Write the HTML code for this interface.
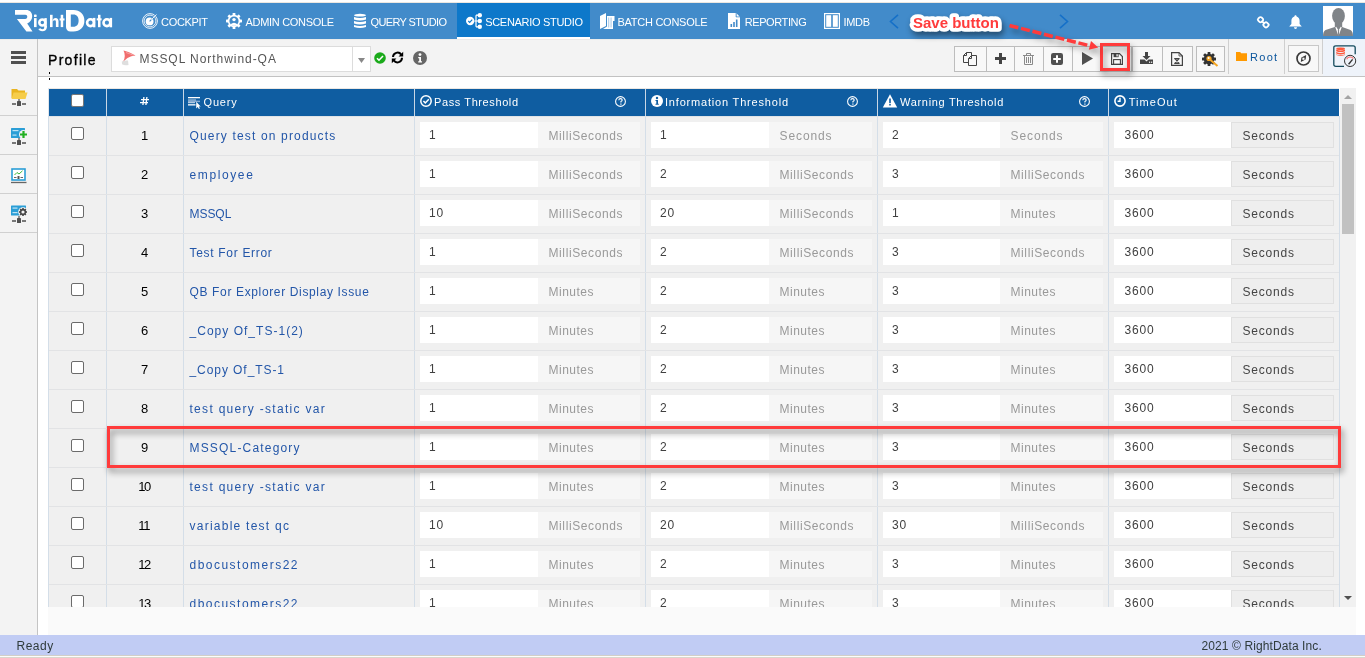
<!DOCTYPE html>
<html><head><meta charset="utf-8"><title>RightData Scenario Studio</title>
<style>
*{box-sizing:border-box;margin:0;padding:0}
html,body{width:1365px;height:658px;overflow:hidden;background:#fff;
 font-family:"Liberation Sans",sans-serif;position:relative}
.a{position:absolute}
.t{position:absolute;white-space:nowrap;line-height:1}
svg{position:absolute;overflow:visible}
#nav{left:0;top:3px;width:1365px;height:36px;background:#428bca}
.nt{color:#fff;font-size:11px;top:16px;letter-spacing:-0.3px}
#tb{left:38px;top:39px;width:1327px;height:37px;background:#f3f3f3}
#sb{left:0;top:39px;width:37px;height:596px;background:#f3f3f3}
.btn{position:absolute;top:46px;height:26px;background:#f8f8f8;border:1px solid #bdbdbd}
.hc{position:absolute;top:89px;height:27px;background:#0f5da1}
.ht{color:#fff;font-size:11px;top:97px}
.cb{position:absolute;width:13px;height:13px;border:1px solid #6b6b6b;border-radius:2px;background:#fff}
.rt{color:#2356a8;font-size:12px;letter-spacing:1.2px}
.num{color:#000;font-size:13px}
.inp{position:absolute;height:26px;background:#fff}
.adn{position:absolute;height:26px;background:#f6f6f6}
.it{color:#404040;font-size:12px;letter-spacing:0.8px}
.at{color:#999;font-size:12px;letter-spacing:0.5px}
</style></head><body>
<div id="root" class="a" style="left:0;top:0;width:1365px;height:658px;background:#fff;will-change:transform">
<div class="a" style="left:0;top:2px;width:1365px;height:1px;background:#ebe7e1"></div>
<div id="nav" class="a"></div>
<div class="a" style="left:457px;top:3px;width:133px;height:34px;background:#0d78ca"></div>
<div class="a" style="left:457px;top:37px;width:133px;height:2px;background:#fff"></div>
<svg style="left:0;top:0" width="130" height="39" viewBox="0 0 130 39">
<g fill="#fff">
<path d="M15 10.1 H26 C30 10.1 32.2 12.8 32.2 16.3 C32.2 19.6 30.4 22.2 27.2 23.4 L32.5 31.6 H26.4 L16.9 18.9 H25.2 C26.6 18.9 27.3 17.9 27.3 16.8 C27.3 15.7 26.6 14.8 25.2 14.8 H15 Z"/>
<rect x="34" y="18.1" width="2.6" height="9"/><rect x="34" y="14.6" width="2.6" height="2.4" rx="0.6"/>
<rect x="44.3" y="18.1" width="2.5" height="9.4"/>
<path d="M46.8 26 V27.6 C46.8 30 45 31.2 42.3 31.2 C40.3 31.2 39 30.3 38.4 29 L40.6 28.3 C41 29 41.5 29.2 42.3 29.2 C43.7 29.2 44.3 28.5 44.3 27.3 V26 Z"/>
<rect x="50" y="14.8" width="2.6" height="12.3"/>
<path d="M52.6 20.5 C53.2 18.8 54.2 18 55.6 18 C57.6 18 58.5 19.3 58.5 21.3 V27.1 H55.9 V21.8 C55.9 20.8 55.5 20.3 54.7 20.3 C53.5 20.3 52.6 21.2 52.6 22.5Z"/>
<rect x="60.7" y="14.8" width="2.5" height="12.3"/><rect x="59.6" y="18.4" width="4.9" height="2.1"/>
<path fill-rule="evenodd" d="M66 10.1 H73.5 C80 10.1 84.4 14.3 84.4 20.8 C84.4 27.3 80 31.6 73.5 31.6 H70.5 C67.8 31.6 66 29.8 66 27.1 Z M70.8 14.6 V26.7 H73.4 C76.8 26.7 78.6 24.4 78.6 20.7 C78.6 17 76.8 14.6 73.4 14.6 Z"/>
<rect x="92.9" y="17.9" width="2.5" height="9.4"/>
<rect x="98" y="14.8" width="2.5" height="12.4"/><rect x="96.7" y="18.3" width="4.9" height="2.1"/>
<rect x="109.6" y="17.9" width="2.5" height="9.4"/>
</g>
<g fill="none" stroke="#fff" stroke-width="2.4">
<circle cx="42.3" cy="22.4" r="3.0" stroke-width="2.5"/>
<circle cx="90.5" cy="22.7" r="3.4" stroke-width="2.6"/>
<circle cx="106.9" cy="22.7" r="3.4" stroke-width="2.6"/>
</g>
</svg>
<div class="t nt" style="left:161px;top:17px;letter-spacing:-0.3px">COCKPIT</div>
<div class="t nt" style="left:245.5px;top:17px;letter-spacing:-0.3px">ADMIN CONSOLE</div>
<div class="t nt" style="left:370.5px;top:17px;letter-spacing:-0.62px">QUERY STUDIO</div>
<div class="t nt" style="left:485.2px;top:17px;letter-spacing:-0.3px">SCENARIO STUDIO</div>
<div class="t nt" style="left:617.4px;top:17px;letter-spacing:-0.25px">BATCH CONSOLE</div>
<div class="t nt" style="left:744.7px;top:17px;letter-spacing:-0.4px">REPORTING</div>
<div class="t nt" style="left:843.4px;top:17px;letter-spacing:-0.3px">IMDB</div>
<svg style="left:142px;top:13px" width="16" height="16" viewBox="0 0 16 16">
<circle cx="8" cy="8" r="7.4" fill="none" stroke="#fff" stroke-width="0.9"/>
<circle cx="8" cy="8" r="5.9" fill="none" stroke="#fff" stroke-width="0.8"/>
<circle cx="7.6" cy="8.4" r="3.9" fill="#fff"/>
<path d="M7.6 8.4 L13.5 2.5" stroke="#428bca" stroke-width="1.1"/>
<path d="M9.2 6.8 L14.5 1.5" stroke="#fff" stroke-width="0.9"/>
</svg>
<svg style="left:226px;top:13px" width="16" height="16" viewBox="0 0 16 16">
<g fill="#fff"><rect x="6.6" y="0" width="2.8" height="16" rx="0.6"/><rect x="0" y="6.6" width="16" height="2.8" rx="0.6"/>
<rect x="6.6" y="0" width="2.8" height="16" rx="0.6" transform="rotate(45 8 8)"/><rect x="6.6" y="0" width="2.8" height="16" rx="0.6" transform="rotate(-45 8 8)"/></g>
<circle cx="8" cy="8" r="6.2" fill="#fff"/>
<circle cx="8" cy="8" r="4.6" fill="#428bca"/>
<circle cx="8" cy="6.6" r="1.7" fill="#fff"/>
<path d="M4.6 11.2 Q8 8.2 11.4 11.2 L11 12 Q8 13.4 5 12 Z" fill="#fff"/>
</svg>
<svg style="left:354px;top:13px" width="12" height="16" viewBox="0 0 12 16">
<g fill="#fff">
<ellipse cx="6" cy="2.2" rx="6" ry="1.4"/>
<path d="M0 3.9 Q6 6.1 12 3.9 V6.4 Q6 8.6 0 6.4 Z"/>
<path d="M0 7.9 Q6 10.1 12 7.9 V10.4 Q6 12.6 0 10.4 Z"/>
<path d="M0 11.9 Q6 14.1 12 11.9 V14 Q6 16.2 0 14 Z"/>
</g></svg>
<svg style="left:466px;top:13px" width="16" height="16" viewBox="0 0 16 16">
<circle cx="4.2" cy="8" r="4.2" fill="#fff"/>
<path d="M2.3 8 L3.7 9.4 L6.2 6.6" fill="none" stroke="#0d78ca" stroke-width="1.1"/>
<path d="M8.4 8 H10 M10 2.2 V13.8 M10 2.2 H13 M10 13.8 H13 M10 8 H13" stroke="#fff" stroke-width="1.2" fill="none"/>
<circle cx="13.8" cy="2.2" r="2.2" fill="#fff"/><circle cx="13.8" cy="8" r="2.2" fill="#fff"/><circle cx="13.8" cy="13.8" r="2.2" fill="#fff"/>
</svg>
<svg style="left:600px;top:13px" width="15" height="16" viewBox="0 0 15 16">
<path d="M0 3 L6 0 V13 L0 16 Z" fill="#fff"/>
<path d="M7 3 H14.5 V8 H13 V16 H3 L7 13.5 Z" fill="#fff"/>
<rect x="8.3" y="4.5" width="0.9" height="10" fill="#9cc0e4"/><rect x="10.6" y="4.5" width="0.9" height="10" fill="#9cc0e4"/>
</svg>
<svg style="left:728px;top:13px" width="12" height="16" viewBox="0 0 12 16">
<path d="M0 0 H8 L12 4 V16 H0 Z" fill="#fff"/>
<path d="M8 0 V4 H12" fill="#428bca" stroke="#428bca" stroke-width="0.6"/>
<path d="M8.6 0.6 L11.4 3.4 H8.6Z" fill="#fff"/>
<rect x="2.5" y="11" width="1.6" height="3" fill="#428bca"/><rect x="5.2" y="9" width="1.6" height="5" fill="#428bca"/><rect x="7.9" y="6.5" width="1.6" height="7.5" fill="#428bca"/>
</svg>
<svg style="left:824px;top:13px" width="16" height="16" viewBox="0 0 16 16">
<rect x="0.6" y="0.6" width="14.8" height="14.8" fill="none" stroke="#fff" stroke-width="1.2"/>
<rect x="2.2" y="2.2" width="5" height="11.6" fill="#fff"/><rect x="8.8" y="2.2" width="5" height="11.6" fill="#fff"/>
</svg>
<svg style="left:889px;top:14px" width="10" height="15" viewBox="0 0 10 15">
<path d="M9 0.8 L1.5 7.5 L9 14.2" fill="none" stroke="#1570c8" stroke-width="1.6"/></svg>
<svg style="left:1059px;top:14px" width="10" height="15" viewBox="0 0 10 15">
<path d="M1 0.8 L8.5 7.5 L1 14.2" fill="none" stroke="#1570c8" stroke-width="1.6"/></svg>
<svg style="left:1257px;top:16px" width="13" height="13" viewBox="0 0 13 13">
<g fill="none" stroke="#fff" stroke-width="1.8">
<rect x="1.2" y="1.4" width="4.6" height="4.6" rx="1.4" transform="rotate(45 3.5 3.7)"/>
<rect x="6.7" y="6.5" width="4.6" height="4.6" rx="1.4" transform="rotate(45 9 8.8)"/>
<path d="M4.8 5.2 L7.6 7.6"/></g></svg>
<svg style="left:1289px;top:14.5px" width="13" height="14" viewBox="0 0 13 14">
<path d="M6.5 0.3 C7.3 0.3 7.6 1 7.6 1.4 C9.8 2 10.6 4 10.6 6 V9 L12.8 11.6 H0.2 L2.4 9 V6 C2.4 4 3.2 2 5.4 1.4 C5.4 1 5.7 0.3 6.5 0.3Z" fill="#fff"/>
<path d="M5 12.3 H8 C8 13.4 7.3 13.9 6.5 13.9 C5.7 13.9 5 13.4 5 12.3Z" fill="#fff"/></svg>
<div class="a" style="left:1323px;top:6px;width:30px;height:30px;background:#fff;overflow:hidden">
<svg style="left:0;top:0" width="30" height="30" viewBox="0 0 30 30">
<ellipse cx="15.5" cy="10" rx="6.4" ry="8" fill="#808488"/>
<path d="M11.8 13 L11.8 21 L2.5 24 Q0 25.5 0 30 H30 Q30 25.5 27.5 24 L19.2 21 V13 Z" fill="#808488"/>
<path d="M12.3 21.2 L15.5 30 L18.7 21.2 L17.8 20.8 L15.5 24.6 L13.2 20.8Z" fill="#fff"/>
<path d="M14.9 24.5 L15.5 23.6 L16.1 24.5 L15.9 30 H15.1Z" fill="#808488"/>
</svg></div>
<div id="tb" class="a"></div>
<div id="sb" class="a"></div>
<div class="a" style="left:0;top:39px;width:1365px;height:1px;background:#ebebeb"></div>
<div class="a" style="left:37px;top:39px;width:1px;height:596px;background:#c4c4c4"></div>
<div class="a" style="left:38px;top:76px;width:1327px;height:1px;background:#c2c2c2"></div>
<div class="a" style="left:1323px;top:39px;width:42px;height:37px;background:#eef3fa"></div>
<div class="a" style="left:11px;top:51px;width:15px;height:3px;background:#505050"></div>
<div class="a" style="left:11px;top:56px;width:15px;height:3px;background:#505050"></div>
<div class="a" style="left:11px;top:61px;width:15px;height:3px;background:#505050"></div>
<div class="t " style="left:48px;top:53px;font-size:14px;color:#000;letter-spacing:1.3px;-webkit-text-stroke:0.35px #000">Profile</div>
<div class="a" style="left:111px;top:46px;width:260px;height:26px;background:#fff;border:1px solid #dcdcdc"></div>
<div class="a" style="left:352px;top:47px;width:1px;height:24px;background:#dcdcdc"></div>
<svg style="left:358px;top:58px" width="7" height="5" viewBox="0 0 7 5"><path d="M0 0 H7 L3.5 5Z" fill="#888"/></svg>
<svg style="left:120px;top:49px" width="16" height="17" viewBox="0 0 16 17">
<path d="M3.5 1.5 Q8.5 2.5 15.5 6.5 Q11 6.8 7.5 9 Q5.5 10.8 3.2 12.5 Q6.2 7 3.5 1.5Z" fill="#ee4a4a" opacity="0.8"/>
<path d="M6 3.5 Q10 4.8 13.5 6.3" stroke="#fff" stroke-width="0.5" fill="none" opacity="0.7"/>
<path d="M1.8 12.5 Q4.5 11 8 11.5 L8.5 16 Q4.5 16.8 2 15.2Z" fill="#c8c8c8" opacity="0.6"/></svg>
<div class="t " style="left:139.5px;top:53px;font-size:12px;color:#555;letter-spacing:0.95px">MSSQL Northwind-QA</div>
<svg style="left:374px;top:52px" width="12" height="12" viewBox="0 0 12 12">
<circle cx="6" cy="6" r="5.8" fill="#1aaa1a"/><path d="M3 6.2 L5 8.2 L9 4" fill="none" stroke="#fff" stroke-width="1.6"/></svg>
<svg style="left:391px;top:51px" width="13" height="13" viewBox="0 0 13 13">
<path d="M2 6 A4.5 4.5 0 0 1 10.2 3.6" fill="none" stroke="#000" stroke-width="2"/>
<path d="M11 6.8 A4.5 4.5 0 0 1 2.8 9.4" fill="none" stroke="#000" stroke-width="2"/>
<path d="M12.2 0.8 V5.4 H7.6Z" fill="#000"/><path d="M0.8 12.2 V7.6 H5.4Z" fill="#000"/></svg>
<svg style="left:413px;top:51px" width="14" height="14" viewBox="0 0 14 14">
<circle cx="7" cy="7" r="7" fill="#666"/><circle cx="7" cy="3.6" r="1.4" fill="#fff"/><path d="M5.2 6 H8 V10.3 H9 V11.6 H5.2 V10.3 H6.2 V7.3 H5.2Z" fill="#fff"/></svg>
<div class="btn" style="left:954px;width:33px;background:#f8f8f8"></div>
<div class="btn" style="left:986px;width:30px;background:#f8f8f8"></div>
<div class="btn" style="left:1014px;width:30px;background:#f8f8f8"></div>
<div class="btn" style="left:1043px;width:30px;background:#f8f8f8"></div>
<div class="btn" style="left:1072px;width:30px;background:#f8f8f8"></div>
<div class="btn" style="left:1102px;width:30px;background:#f8f8f8"></div>
<div class="btn" style="left:1132px;width:31px;background:#f8f8f8"></div>
<div class="btn" style="left:1162px;width:31px;background:#f8f8f8"></div>
<div class="btn" style="left:1196px;width:29px;background:#f8f8f8"></div>
<svg style="left:963px;top:52px" width="15" height="15" viewBox="0 0 15 15">
<path d="M0.5 3.5 L3.5 0.5 H8.5 V10.5 H0.5Z" fill="#f8f8f8" stroke="#444" stroke-width="1"/>
<path d="M0.5 3.5 H3.5 V0.5" fill="none" stroke="#444" stroke-width="1"/>
<path d="M5.5 6.5 L8.5 3.5 H13.5 V13.5 H5.5Z" fill="#f8f8f8" stroke="#444" stroke-width="1"/>
<path d="M5.5 6.5 H8.5 V3.5" fill="none" stroke="#444" stroke-width="1"/></svg>
<svg style="left:995px;top:53px" width="11" height="11" viewBox="0 0 11 11"><path d="M4 0 H7 V4 H11 V7 H7 V11 H4 V7 H0 V4 H4Z" fill="#444"/></svg>
<svg style="left:1023px;top:53px" width="11" height="12" viewBox="0 0 11 12">
<g fill="none" stroke="#8a8a8a" stroke-width="1"><path d="M0 2.5 H11 M3.5 2.5 V0.5 H7.5 V2.5 M1.5 2.5 V11.5 H9.5 V2.5 M3.5 4 V10 M5.5 4 V10 M7.5 4 V10"/></g></svg>
<svg style="left:1051px;top:53px" width="12" height="12" viewBox="0 0 12 12">
<rect x="0" y="0" width="12" height="12" rx="2.2" fill="#505050"/><path d="M5 2.2 H7 V5 H9.8 V7 H7 V9.8 H5 V7 H2.2 V5 H5Z" fill="#fff"/></svg>
<svg style="left:1082px;top:52px" width="11" height="13" viewBox="0 0 11 13"><path d="M0 0 L11 6.5 L0 13Z" fill="#505050"/></svg>
<svg style="left:1111px;top:53px" width="12" height="12" viewBox="0 0 12 12">
<path d="M0.6 0.6 H8.5 L11.4 3.5 V11.4 H0.6Z" fill="none" stroke="#444" stroke-width="1.2"/>
<rect x="2.6" y="0.6" width="5" height="3.6" fill="#444"/><rect x="5.4" y="1.2" width="1.4" height="2.2" fill="#f0f0f0"/>
<rect x="2.6" y="6.6" width="6.8" height="4.8" fill="none" stroke="#444" stroke-width="1.1"/></svg>
<svg style="left:1140px;top:52px" width="13" height="12" viewBox="0 0 13 12">
<path d="M5 0 H8 V4 H10.5 L6.5 8 L2.5 4 H5Z" fill="#444"/>
<path d="M0 7.5 H4.5 L6.5 9.5 L8.5 7.5 H13 V12 H0Z" fill="#444"/>
<rect x="9" y="9.6" width="1.2" height="1.2" fill="#fff"/><rect x="11" y="9.6" width="1.2" height="1.2" fill="#fff"/></svg>
<svg style="left:1171px;top:52px" width="12" height="14" viewBox="0 0 12 14">
<path d="M0.6 0.6 H8 L11.4 4 V13.4 H0.6Z" fill="none" stroke="#444" stroke-width="1.2"/>
<path d="M8 0.6 V4 H11.4" fill="none" stroke="#444" stroke-width="0.8"/>
<path d="M3.2 6.6 H8.6 M3.2 11.4 H8.6 M4 6.6 L8 11.4 M8 6.6 L4 11.4" stroke="#444" stroke-width="1.1" fill="none"/></svg>
<svg style="left:1202px;top:52px" width="17" height="15" viewBox="0 0 17 15">
<g fill="#333"><rect x="5.6" y="0" width="2.8" height="14" rx="0.5"/><rect x="0" y="5.6" width="14" height="2.8" rx="0.5"/>
<rect x="5.6" y="0" width="2.8" height="14" rx="0.5" transform="rotate(45 7 7)"/><rect x="5.6" y="0" width="2.8" height="14" rx="0.5" transform="rotate(-45 7 7)"/>
<circle cx="7" cy="7" r="5.2"/></g>
<circle cx="7" cy="6.5" r="2.6" fill="#f5a623"/><circle cx="6.6" cy="6" r="1" fill="#fff"/>
<path d="M8.5 8 L15.5 14" stroke="#f5a623" stroke-width="2"/></svg>
<div class="a" style="left:1228px;top:39px;width:1px;height:35px;background:#cfcfcf"></div>
<div class="a" style="left:1284px;top:39px;width:1px;height:35px;background:#cfcfcf"></div>
<div class="a" style="left:1322px;top:39px;width:1px;height:35px;background:#cfcfcf"></div>
<svg style="left:1236px;top:52px" width="11" height="9" viewBox="0 0 11 9"><path d="M0 0 H4.2 L5.2 1.3 H11 V9 H0Z" fill="#ff9900"/></svg>
<div class="t " style="left:1250px;top:52px;font-size:11px;color:#0a559c;letter-spacing:1.3px">Root</div>
<div class="btn" style="left:1288px;top:45px;width:31px;height:27px;background:#f8f8f8;border-color:#c8c8c8"></div>
<svg style="left:1296px;top:51px" width="15" height="15" viewBox="0 0 15 15">
<circle cx="7.5" cy="7.5" r="6.5" fill="none" stroke="#3a3a3a" stroke-width="1.7"/>
<path d="M10.2 4.1 L9.6 8.6 L4.8 11 L5.4 6.4Z" fill="#3a3a3a"/><rect x="6.4" y="6.7" width="2.1" height="2.1" fill="#f8f8f8"/></svg>
<svg style="left:1333px;top:45px" width="24" height="23" viewBox="0 0 24 23">
<path d="M11 21.3 H2.8 Q0.8 21.3 0.8 19.3 V2.8 Q0.8 0.8 2.8 0.8 H20.2 Q22.2 0.8 22.2 2.8 V9.3" fill="none" stroke="#134a5c" stroke-width="1.3"/>
<g fill="#ff5a3c"><ellipse cx="7.6" cy="3.8" rx="4.4" ry="1.2"/><path d="M3.2 4.6 Q7.6 6.4 12 4.6 V6.2 Q7.6 8 3.2 6.2Z"/><path d="M3.2 7 Q7.6 8.8 12 7 V8.6 Q7.6 10.4 3.2 8.6Z"/><path d="M3.2 9.2 Q7.6 11 12 9.2 V10 Q7.6 11.8 3.2 10Z" opacity="0.8"/></g>
<circle cx="17.1" cy="15.9" r="5.6" fill="#eef3fa" stroke="#333" stroke-width="1"/>
<path d="M13.6 14.2 A4 4 0 0 1 20.4 13.6" fill="none" stroke="#ff6a6a" stroke-width="1.1"/>
<path d="M15.6 19.2 L19.6 14.4" stroke="#333" stroke-width="1.4"/></svg>
<div class="a" style="left:0;top:115px;width:37px;height:1px;background:#d0d0d0"></div>
<div class="a" style="left:0;top:154px;width:37px;height:1px;background:#d0d0d0"></div>
<div class="a" style="left:0;top:193px;width:37px;height:1px;background:#d0d0d0"></div>
<div class="a" style="left:0;top:232px;width:37px;height:1px;background:#d0d0d0"></div>
<svg style="left:11px;top:88px" width="17" height="19" viewBox="0 0 17 19">
<path d="M0.5 1 H6 L7.5 2.5 H14 V10 H0.5Z" fill="#e9b420"/>
<path d="M2.5 4.5 H16.5 L14.5 11 H0.5Z" fill="#f6cd4a"/>
<g transform="translate(1,0)"><path d="M0 16 H4 M10 16 H14" stroke="#505050" stroke-width="1.4"/><rect x="5" y="13" width="4" height="5" rx="0.6" fill="#505050"/><path d="M7 11 V13" stroke="#505050" stroke-width="1.2"/></g></svg>
<svg style="left:11px;top:127px" width="17" height="19" viewBox="0 0 17 19">
<rect x="0" y="1" width="14" height="10" rx="0.5" fill="#2b9ed6"/>
<rect x="1.5" y="3" width="6" height="1.2" fill="#bfe3f5"/><rect x="1.5" y="7.5" width="4" height="1.2" fill="#bfe3f5"/>
<circle cx="12.5" cy="7.5" r="4.5" fill="#f3f3f3"/>
<path d="M12.5 4 V11 M9 7.5 H16" stroke="#22b022" stroke-width="2.2"/>
<g transform="translate(1,0)"><path d="M0 16 H4 M10 16 H14" stroke="#505050" stroke-width="1.4"/><rect x="5" y="13" width="4" height="5" rx="0.6" fill="#505050"/><path d="M7 11 V13" stroke="#505050" stroke-width="1.2"/></g></svg>
<svg style="left:11px;top:168px" width="17" height="16" viewBox="0 0 17 16">
<rect x="1" y="1" width="13" height="11" fill="#fff" stroke="#2b9ed6" stroke-width="1.6"/>
<path d="M3.5 7 L6 4.5 L8 6 L11.5 2.8" fill="none" stroke="#3cb83c" stroke-width="1"/>
<path d="M3 9.5 H5.5 M9.5 9.5 H12" stroke="#555" stroke-width="0.9"/><rect x="6.5" y="8" width="2" height="3" fill="#555"/>
<path d="M0 14.5 H15.5" stroke="#666" stroke-width="1.3"/></svg>
<svg style="left:11px;top:205px" width="17" height="19" viewBox="0 0 17 19">
<rect x="0" y="0.5" width="15" height="10" rx="0.5" fill="#2b9ed6"/>
<rect x="1.5" y="2.5" width="5" height="1.2" fill="#bfe3f5"/><rect x="1.5" y="7" width="5" height="1.2" fill="#bfe3f5"/>
<circle cx="12" cy="7" r="4.8" fill="#f3f3f3"/>
<g fill="#444"><circle cx="12" cy="7" r="3"/><rect x="11.2" y="3" width="1.6" height="8"/><rect x="8" y="6.2" width="8" height="1.6"/>
<rect x="11.2" y="3" width="1.6" height="8" transform="rotate(45 12 7)"/><rect x="11.2" y="3" width="1.6" height="8" transform="rotate(-45 12 7)"/></g>
<circle cx="12" cy="7" r="1.6" fill="#f3f3f3"/>
<g transform="translate(1,0)"><path d="M0 16 H4 M10 16 H14" stroke="#505050" stroke-width="1.4"/><rect x="5" y="13" width="4" height="5" rx="0.6" fill="#505050"/><path d="M7 11 V13" stroke="#505050" stroke-width="1.2"/></g></svg>
<div class="a" style="left:38px;top:77px;width:1327px;height:558px;background:#fff"></div>
<div class="a" style="left:48px;top:607px;width:1308px;height:28px;background:#fafafa"></div>
<div class="a" style="left:48.5px;top:72px;width:1.6px;height:2px;background:#000"></div>
<div class="a" style="left:48.5px;top:78px;width:1.6px;height:2px;background:#000"></div>
<div class="a" id="clip" style="left:0;top:0;width:1365px;height:607px;overflow:hidden">
<div class="a" style="left:48px;top:116px;width:1291px;height:500px;background:#f0f0f0"></div>
<div class="a" style="left:49px;top:89px;width:1290px;height:27px;background:#0f5da1"></div>
<div class="a" style="left:48px;top:116px;width:1px;height:500px;background:#d4dee8"></div>
<div class="a" style="left:106px;top:116px;width:1px;height:500px;background:#d4dee8"></div>
<div class="a" style="left:106px;top:89px;width:1px;height:27px;background:#c9d7e6"></div>
<div class="a" style="left:183px;top:116px;width:1px;height:500px;background:#d4dee8"></div>
<div class="a" style="left:183px;top:89px;width:1px;height:27px;background:#c9d7e6"></div>
<div class="a" style="left:414px;top:116px;width:1px;height:500px;background:#d4dee8"></div>
<div class="a" style="left:414px;top:89px;width:1px;height:27px;background:#c9d7e6"></div>
<div class="a" style="left:645px;top:116px;width:1px;height:500px;background:#d4dee8"></div>
<div class="a" style="left:645px;top:89px;width:1px;height:27px;background:#c9d7e6"></div>
<div class="a" style="left:877px;top:116px;width:1px;height:500px;background:#d4dee8"></div>
<div class="a" style="left:877px;top:89px;width:1px;height:27px;background:#c9d7e6"></div>
<div class="a" style="left:1108px;top:116px;width:1px;height:500px;background:#d4dee8"></div>
<div class="a" style="left:1108px;top:89px;width:1px;height:27px;background:#c9d7e6"></div>
<div class="a" style="left:1339px;top:116px;width:1px;height:500px;background:#d4dee8"></div>
<div class="a" style="left:48px;top:88px;width:1px;height:28px;background:#dfe5ec"></div>
<div class="a" style="left:49px;top:88px;width:1290px;height:1px;background:#ece8e4"></div>
<div class="a" style="left:49px;top:116px;width:1290px;height:1px;background:#dfe3e7"></div>
<div class="a" style="left:49px;top:155px;width:1290px;height:1px;background:#e2e3e5"></div>
<div class="a" style="left:49px;top:194px;width:1290px;height:1px;background:#e2e3e5"></div>
<div class="a" style="left:49px;top:233px;width:1290px;height:1px;background:#e2e3e5"></div>
<div class="a" style="left:49px;top:272px;width:1290px;height:1px;background:#e2e3e5"></div>
<div class="a" style="left:49px;top:311px;width:1290px;height:1px;background:#e2e3e5"></div>
<div class="a" style="left:49px;top:350px;width:1290px;height:1px;background:#e2e3e5"></div>
<div class="a" style="left:49px;top:389px;width:1290px;height:1px;background:#e2e3e5"></div>
<div class="a" style="left:49px;top:428px;width:1290px;height:1px;background:#e2e3e5"></div>
<div class="a" style="left:49px;top:467px;width:1290px;height:1px;background:#e2e3e5"></div>
<div class="a" style="left:49px;top:506px;width:1290px;height:1px;background:#e2e3e5"></div>
<div class="a" style="left:49px;top:545px;width:1290px;height:1px;background:#e2e3e5"></div>
<div class="a" style="left:49px;top:584px;width:1290px;height:1px;background:#e2e3e5"></div>
<div class="cb" style="left:71px;top:94px;border-color:#777"></div>
<svg style="left:140px;top:97px" width="9" height="8" viewBox="0 0 9 8"><path d="M3.9 0 L2.9 8 M6.9 0 L5.9 8 M1 2.6 H9 M0 5.6 H8" stroke="#fff" stroke-width="1.3" fill="none"/></svg>
<div class="t ht" style="left:203.5px;top:97px;letter-spacing:0.85px">Query</div>
<div class="t ht" style="left:434px;top:97px;letter-spacing:0.6px">Pass Threshold</div>
<div class="t ht" style="left:665px;top:97px;letter-spacing:0.81px">Information Threshold</div>
<div class="t ht" style="left:900px;top:97px;letter-spacing:0.69px">Warning Threshold</div>
<div class="t ht" style="left:1128.7px;top:97px;letter-spacing:1.05px">TimeOut</div>
<svg style="left:615px;top:96px" width="11" height="11" viewBox="0 0 11 11"><circle cx="5.5" cy="5.5" r="4.9" fill="none" stroke="#fff" stroke-width="1.1"/><path d="M3.8 4.2 Q3.8 2.6 5.5 2.6 Q7.2 2.6 7.2 4 Q7.2 5 5.9 5.6 V6.6" fill="none" stroke="#fff" stroke-width="1.1"/><rect x="5.3" y="7.5" width="1.2" height="1.2" fill="#fff"/></svg>
<svg style="left:847px;top:96px" width="11" height="11" viewBox="0 0 11 11"><circle cx="5.5" cy="5.5" r="4.9" fill="none" stroke="#fff" stroke-width="1.1"/><path d="M3.8 4.2 Q3.8 2.6 5.5 2.6 Q7.2 2.6 7.2 4 Q7.2 5 5.9 5.6 V6.6" fill="none" stroke="#fff" stroke-width="1.1"/><rect x="5.3" y="7.5" width="1.2" height="1.2" fill="#fff"/></svg>
<svg style="left:1079px;top:96px" width="11" height="11" viewBox="0 0 11 11"><circle cx="5.5" cy="5.5" r="4.9" fill="none" stroke="#fff" stroke-width="1.1"/><path d="M3.8 4.2 Q3.8 2.6 5.5 2.6 Q7.2 2.6 7.2 4 Q7.2 5 5.9 5.6 V6.6" fill="none" stroke="#fff" stroke-width="1.1"/><rect x="5.3" y="7.5" width="1.2" height="1.2" fill="#fff"/></svg>
<svg style="left:188px;top:96px" width="13" height="13" viewBox="0 0 13 13">
<rect x="0" y="1" width="12" height="1.3" fill="#fff"/>
<rect x="0" y="3.5" width="8" height="1.1" fill="#c4d6ea"/>
<rect x="0" y="4.6" width="12" height="1.5" fill="#86abd2"/>
<rect x="0" y="6.1" width="7" height="1.1" fill="#c4d6ea"/>
<rect x="0" y="8.2" width="7.5" height="1.3" fill="#fff"/>
<path d="M8.2 5.8 L8.2 12.4 L9.7 11 L10.9 13 L11.9 12.5 L10.8 10.5 L12.7 10.5Z" fill="#fff"/></svg>
<svg style="left:420px;top:95px" width="12" height="12" viewBox="0 0 12 12">
<circle cx="6" cy="6" r="5.2" fill="none" stroke="#fff" stroke-width="1.5"/><path d="M3.4 6 L5.3 7.9 L8.8 4.3" fill="none" stroke="#fff" stroke-width="1.5"/></svg>
<svg style="left:651px;top:95px" width="12" height="12" viewBox="0 0 12 12">
<circle cx="6" cy="6" r="6" fill="#fff"/><circle cx="6" cy="3" r="1.2" fill="#0f5da1"/><path d="M4.5 5 H7 V8.8 H7.8 V9.8 H4.5 V8.8 H5.3 V6 H4.5Z" fill="#0f5da1"/></svg>
<svg style="left:883px;top:93.5px" width="14" height="14" viewBox="0 0 14 14">
<path d="M7 0.3 L14.2 13.4 H-0.2Z" fill="#fff"/><rect x="6.2" y="4.5" width="1.6" height="4.6" fill="#0f5da1"/><rect x="6.2" y="9.9" width="1.6" height="1.6" fill="#0f5da1"/></svg>
<svg style="left:1114px;top:95px" width="12" height="12" viewBox="0 0 12 12">
<circle cx="6" cy="6" r="5.1" fill="none" stroke="#fff" stroke-width="1.6"/><path d="M6 2.8 V6.3 H3.6" fill="none" stroke="#fff" stroke-width="1.4"/></svg>
<div class="cb" style="left:71px;top:127px"></div>
<div class="t num" style="left:141px;top:129px;">1</div>
<div class="t rt" style="left:189.5px;top:130px;letter-spacing:1.16px">Query test on products</div>
<div class="inp" style="left:420px;top:122px;width:118px"></div>
<div class="adn" style="left:538px;top:122px;width:102px"></div>
<div class="t it" style="left:429px;top:129px;">1</div>
<div class="t at" style="left:548.5px;top:130px;letter-spacing:0.6px">MilliSeconds</div>
<div class="inp" style="left:651px;top:122px;width:118px"></div>
<div class="adn" style="left:769px;top:122px;width:103px"></div>
<div class="t it" style="left:660px;top:129px;">1</div>
<div class="t at" style="left:779.5px;top:130px;letter-spacing:0.9px">Seconds</div>
<div class="inp" style="left:883px;top:122px;width:117px"></div>
<div class="adn" style="left:1000px;top:122px;width:103px"></div>
<div class="t it" style="left:892px;top:129px;">2</div>
<div class="t at" style="left:1010.5px;top:130px;letter-spacing:0.9px">Seconds</div>
<div class="inp" style="left:1114px;top:122px;width:117px"></div>
<div class="adn" style="left:1231px;top:122px;width:103px;background:#eeeeee;border:1px solid #e0e0e0"></div>
<div class="t it" style="left:1124.5px;top:129px;">3600</div>
<div class="t at" style="left:1242.5px;top:130px;color:#444;letter-spacing:0.8px">Seconds</div>
<div class="cb" style="left:71px;top:166px"></div>
<div class="t num" style="left:141px;top:168px;">2</div>
<div class="t rt" style="left:189.5px;top:169px;letter-spacing:1.61px">employee</div>
<div class="inp" style="left:420px;top:161px;width:118px"></div>
<div class="adn" style="left:538px;top:161px;width:102px"></div>
<div class="t it" style="left:429px;top:168px;">1</div>
<div class="t at" style="left:548.5px;top:169px;letter-spacing:0.6px">MilliSeconds</div>
<div class="inp" style="left:651px;top:161px;width:118px"></div>
<div class="adn" style="left:769px;top:161px;width:103px"></div>
<div class="t it" style="left:660px;top:168px;">2</div>
<div class="t at" style="left:779.5px;top:169px;letter-spacing:0.6px">MilliSeconds</div>
<div class="inp" style="left:883px;top:161px;width:117px"></div>
<div class="adn" style="left:1000px;top:161px;width:103px"></div>
<div class="t it" style="left:892px;top:168px;">3</div>
<div class="t at" style="left:1010.5px;top:169px;letter-spacing:0.6px">MilliSeconds</div>
<div class="inp" style="left:1114px;top:161px;width:117px"></div>
<div class="adn" style="left:1231px;top:161px;width:103px;background:#eeeeee;border:1px solid #e0e0e0"></div>
<div class="t it" style="left:1124.5px;top:168px;">3600</div>
<div class="t at" style="left:1242.5px;top:169px;color:#444;letter-spacing:0.8px">Seconds</div>
<div class="cb" style="left:71px;top:205px"></div>
<div class="t num" style="left:141px;top:207px;">3</div>
<div class="t rt" style="left:189.5px;top:208px;letter-spacing:-0.05px">MSSQL</div>
<div class="inp" style="left:420px;top:200px;width:118px"></div>
<div class="adn" style="left:538px;top:200px;width:102px"></div>
<div class="t it" style="left:429px;top:207px;">10</div>
<div class="t at" style="left:548.5px;top:208px;letter-spacing:0.6px">MilliSeconds</div>
<div class="inp" style="left:651px;top:200px;width:118px"></div>
<div class="adn" style="left:769px;top:200px;width:103px"></div>
<div class="t it" style="left:660px;top:207px;">20</div>
<div class="t at" style="left:779.5px;top:208px;letter-spacing:0.6px">MilliSeconds</div>
<div class="inp" style="left:883px;top:200px;width:117px"></div>
<div class="adn" style="left:1000px;top:200px;width:103px"></div>
<div class="t it" style="left:892px;top:207px;">1</div>
<div class="t at" style="left:1010.5px;top:208px;">Minutes</div>
<div class="inp" style="left:1114px;top:200px;width:117px"></div>
<div class="adn" style="left:1231px;top:200px;width:103px;background:#eeeeee;border:1px solid #e0e0e0"></div>
<div class="t it" style="left:1124.5px;top:207px;">3600</div>
<div class="t at" style="left:1242.5px;top:208px;color:#444;letter-spacing:0.8px">Seconds</div>
<div class="cb" style="left:71px;top:244px"></div>
<div class="t num" style="left:141px;top:246px;">4</div>
<div class="t rt" style="left:189.5px;top:247px;letter-spacing:0.69px">Test For Error</div>
<div class="inp" style="left:420px;top:239px;width:118px"></div>
<div class="adn" style="left:538px;top:239px;width:102px"></div>
<div class="t it" style="left:429px;top:246px;">1</div>
<div class="t at" style="left:548.5px;top:247px;letter-spacing:0.6px">MilliSeconds</div>
<div class="inp" style="left:651px;top:239px;width:118px"></div>
<div class="adn" style="left:769px;top:239px;width:103px"></div>
<div class="t it" style="left:660px;top:246px;">2</div>
<div class="t at" style="left:779.5px;top:247px;letter-spacing:0.6px">MilliSeconds</div>
<div class="inp" style="left:883px;top:239px;width:117px"></div>
<div class="adn" style="left:1000px;top:239px;width:103px"></div>
<div class="t it" style="left:892px;top:246px;">3</div>
<div class="t at" style="left:1010.5px;top:247px;letter-spacing:0.6px">MilliSeconds</div>
<div class="inp" style="left:1114px;top:239px;width:117px"></div>
<div class="adn" style="left:1231px;top:239px;width:103px;background:#eeeeee;border:1px solid #e0e0e0"></div>
<div class="t it" style="left:1124.5px;top:246px;">3600</div>
<div class="t at" style="left:1242.5px;top:247px;color:#444;letter-spacing:0.8px">Seconds</div>
<div class="cb" style="left:71px;top:283px"></div>
<div class="t num" style="left:141px;top:285px;">5</div>
<div class="t rt" style="left:189.5px;top:286px;letter-spacing:0.64px">QB For Explorer Display Issue</div>
<div class="inp" style="left:420px;top:278px;width:118px"></div>
<div class="adn" style="left:538px;top:278px;width:102px"></div>
<div class="t it" style="left:429px;top:285px;">1</div>
<div class="t at" style="left:548.5px;top:286px;">Minutes</div>
<div class="inp" style="left:651px;top:278px;width:118px"></div>
<div class="adn" style="left:769px;top:278px;width:103px"></div>
<div class="t it" style="left:660px;top:285px;">2</div>
<div class="t at" style="left:779.5px;top:286px;">Minutes</div>
<div class="inp" style="left:883px;top:278px;width:117px"></div>
<div class="adn" style="left:1000px;top:278px;width:103px"></div>
<div class="t it" style="left:892px;top:285px;">3</div>
<div class="t at" style="left:1010.5px;top:286px;">Minutes</div>
<div class="inp" style="left:1114px;top:278px;width:117px"></div>
<div class="adn" style="left:1231px;top:278px;width:103px;background:#eeeeee;border:1px solid #e0e0e0"></div>
<div class="t it" style="left:1124.5px;top:285px;">3600</div>
<div class="t at" style="left:1242.5px;top:286px;color:#444;letter-spacing:0.8px">Seconds</div>
<div class="cb" style="left:71px;top:322px"></div>
<div class="t num" style="left:141px;top:324px;">6</div>
<div class="t rt" style="left:189.5px;top:325px;letter-spacing:1.02px">_Copy Of_TS-1(2)</div>
<div class="inp" style="left:420px;top:317px;width:118px"></div>
<div class="adn" style="left:538px;top:317px;width:102px"></div>
<div class="t it" style="left:429px;top:324px;">1</div>
<div class="t at" style="left:548.5px;top:325px;">Minutes</div>
<div class="inp" style="left:651px;top:317px;width:118px"></div>
<div class="adn" style="left:769px;top:317px;width:103px"></div>
<div class="t it" style="left:660px;top:324px;">2</div>
<div class="t at" style="left:779.5px;top:325px;">Minutes</div>
<div class="inp" style="left:883px;top:317px;width:117px"></div>
<div class="adn" style="left:1000px;top:317px;width:103px"></div>
<div class="t it" style="left:892px;top:324px;">3</div>
<div class="t at" style="left:1010.5px;top:325px;">Minutes</div>
<div class="inp" style="left:1114px;top:317px;width:117px"></div>
<div class="adn" style="left:1231px;top:317px;width:103px;background:#eeeeee;border:1px solid #e0e0e0"></div>
<div class="t it" style="left:1124.5px;top:324px;">3600</div>
<div class="t at" style="left:1242.5px;top:325px;color:#444;letter-spacing:0.8px">Seconds</div>
<div class="cb" style="left:71px;top:361px"></div>
<div class="t num" style="left:141px;top:363px;">7</div>
<div class="t rt" style="left:189.5px;top:364px;letter-spacing:0.93px">_Copy Of_TS-1</div>
<div class="inp" style="left:420px;top:356px;width:118px"></div>
<div class="adn" style="left:538px;top:356px;width:102px"></div>
<div class="t it" style="left:429px;top:363px;">1</div>
<div class="t at" style="left:548.5px;top:364px;">Minutes</div>
<div class="inp" style="left:651px;top:356px;width:118px"></div>
<div class="adn" style="left:769px;top:356px;width:103px"></div>
<div class="t it" style="left:660px;top:363px;">2</div>
<div class="t at" style="left:779.5px;top:364px;">Minutes</div>
<div class="inp" style="left:883px;top:356px;width:117px"></div>
<div class="adn" style="left:1000px;top:356px;width:103px"></div>
<div class="t it" style="left:892px;top:363px;">3</div>
<div class="t at" style="left:1010.5px;top:364px;">Minutes</div>
<div class="inp" style="left:1114px;top:356px;width:117px"></div>
<div class="adn" style="left:1231px;top:356px;width:103px;background:#eeeeee;border:1px solid #e0e0e0"></div>
<div class="t it" style="left:1124.5px;top:363px;">3600</div>
<div class="t at" style="left:1242.5px;top:364px;color:#444;letter-spacing:0.8px">Seconds</div>
<div class="cb" style="left:71px;top:400px"></div>
<div class="t num" style="left:141px;top:402px;">8</div>
<div class="t rt" style="left:189.5px;top:403px;letter-spacing:1.29px">test query -static var</div>
<div class="inp" style="left:420px;top:395px;width:118px"></div>
<div class="adn" style="left:538px;top:395px;width:102px"></div>
<div class="t it" style="left:429px;top:402px;">1</div>
<div class="t at" style="left:548.5px;top:403px;">Minutes</div>
<div class="inp" style="left:651px;top:395px;width:118px"></div>
<div class="adn" style="left:769px;top:395px;width:103px"></div>
<div class="t it" style="left:660px;top:402px;">2</div>
<div class="t at" style="left:779.5px;top:403px;">Minutes</div>
<div class="inp" style="left:883px;top:395px;width:117px"></div>
<div class="adn" style="left:1000px;top:395px;width:103px"></div>
<div class="t it" style="left:892px;top:402px;">3</div>
<div class="t at" style="left:1010.5px;top:403px;">Minutes</div>
<div class="inp" style="left:1114px;top:395px;width:117px"></div>
<div class="adn" style="left:1231px;top:395px;width:103px;background:#eeeeee;border:1px solid #e0e0e0"></div>
<div class="t it" style="left:1124.5px;top:402px;">3600</div>
<div class="t at" style="left:1242.5px;top:403px;color:#444;letter-spacing:0.8px">Seconds</div>
<div class="cb" style="left:71px;top:439px"></div>
<div class="t num" style="left:141px;top:441px;">9</div>
<div class="t rt" style="left:189.5px;top:442px;letter-spacing:1.18px">MSSQL-Category</div>
<div class="inp" style="left:420px;top:434px;width:118px"></div>
<div class="adn" style="left:538px;top:434px;width:102px"></div>
<div class="t it" style="left:429px;top:441px;">1</div>
<div class="t at" style="left:548.5px;top:442px;">Minutes</div>
<div class="inp" style="left:651px;top:434px;width:118px"></div>
<div class="adn" style="left:769px;top:434px;width:103px"></div>
<div class="t it" style="left:660px;top:441px;">2</div>
<div class="t at" style="left:779.5px;top:442px;">Minutes</div>
<div class="inp" style="left:883px;top:434px;width:117px"></div>
<div class="adn" style="left:1000px;top:434px;width:103px"></div>
<div class="t it" style="left:892px;top:441px;">3</div>
<div class="t at" style="left:1010.5px;top:442px;">Minutes</div>
<div class="inp" style="left:1114px;top:434px;width:117px"></div>
<div class="adn" style="left:1231px;top:434px;width:103px;background:#eeeeee;border:1px solid #e0e0e0"></div>
<div class="t it" style="left:1124.5px;top:441px;">3600</div>
<div class="t at" style="left:1242.5px;top:442px;color:#444;letter-spacing:0.8px">Seconds</div>
<div class="cb" style="left:71px;top:478px"></div>
<div class="t num" style="left:138.2px;top:480px;letter-spacing:-1.3px">10</div>
<div class="t rt" style="left:189.5px;top:481px;letter-spacing:1.29px">test query -static var</div>
<div class="inp" style="left:420px;top:473px;width:118px"></div>
<div class="adn" style="left:538px;top:473px;width:102px"></div>
<div class="t it" style="left:429px;top:480px;">1</div>
<div class="t at" style="left:548.5px;top:481px;">Minutes</div>
<div class="inp" style="left:651px;top:473px;width:118px"></div>
<div class="adn" style="left:769px;top:473px;width:103px"></div>
<div class="t it" style="left:660px;top:480px;">2</div>
<div class="t at" style="left:779.5px;top:481px;">Minutes</div>
<div class="inp" style="left:883px;top:473px;width:117px"></div>
<div class="adn" style="left:1000px;top:473px;width:103px"></div>
<div class="t it" style="left:892px;top:480px;">3</div>
<div class="t at" style="left:1010.5px;top:481px;">Minutes</div>
<div class="inp" style="left:1114px;top:473px;width:117px"></div>
<div class="adn" style="left:1231px;top:473px;width:103px;background:#eeeeee;border:1px solid #e0e0e0"></div>
<div class="t it" style="left:1124.5px;top:480px;">3600</div>
<div class="t at" style="left:1242.5px;top:481px;color:#444;letter-spacing:0.8px">Seconds</div>
<div class="cb" style="left:71px;top:517px"></div>
<div class="t num" style="left:138.2px;top:519px;letter-spacing:-1.3px">11</div>
<div class="t rt" style="left:189.5px;top:520px;letter-spacing:1.25px">variable test qc</div>
<div class="inp" style="left:420px;top:512px;width:118px"></div>
<div class="adn" style="left:538px;top:512px;width:102px"></div>
<div class="t it" style="left:429px;top:519px;">10</div>
<div class="t at" style="left:548.5px;top:520px;letter-spacing:0.6px">MilliSeconds</div>
<div class="inp" style="left:651px;top:512px;width:118px"></div>
<div class="adn" style="left:769px;top:512px;width:103px"></div>
<div class="t it" style="left:660px;top:519px;">20</div>
<div class="t at" style="left:779.5px;top:520px;letter-spacing:0.6px">MilliSeconds</div>
<div class="inp" style="left:883px;top:512px;width:117px"></div>
<div class="adn" style="left:1000px;top:512px;width:103px"></div>
<div class="t it" style="left:892px;top:519px;">30</div>
<div class="t at" style="left:1010.5px;top:520px;letter-spacing:0.6px">MilliSeconds</div>
<div class="inp" style="left:1114px;top:512px;width:117px"></div>
<div class="adn" style="left:1231px;top:512px;width:103px;background:#eeeeee;border:1px solid #e0e0e0"></div>
<div class="t it" style="left:1124.5px;top:519px;">3600</div>
<div class="t at" style="left:1242.5px;top:520px;color:#444;letter-spacing:0.8px">Seconds</div>
<div class="cb" style="left:71px;top:556px"></div>
<div class="t num" style="left:138.2px;top:558px;letter-spacing:-1.3px">12</div>
<div class="t rt" style="left:189.5px;top:559px;letter-spacing:1.48px">dbocustomers22</div>
<div class="inp" style="left:420px;top:551px;width:118px"></div>
<div class="adn" style="left:538px;top:551px;width:102px"></div>
<div class="t it" style="left:429px;top:558px;">1</div>
<div class="t at" style="left:548.5px;top:559px;">Minutes</div>
<div class="inp" style="left:651px;top:551px;width:118px"></div>
<div class="adn" style="left:769px;top:551px;width:103px"></div>
<div class="t it" style="left:660px;top:558px;">2</div>
<div class="t at" style="left:779.5px;top:559px;">Minutes</div>
<div class="inp" style="left:883px;top:551px;width:117px"></div>
<div class="adn" style="left:1000px;top:551px;width:103px"></div>
<div class="t it" style="left:892px;top:558px;">3</div>
<div class="t at" style="left:1010.5px;top:559px;">Minutes</div>
<div class="inp" style="left:1114px;top:551px;width:117px"></div>
<div class="adn" style="left:1231px;top:551px;width:103px;background:#eeeeee;border:1px solid #e0e0e0"></div>
<div class="t it" style="left:1124.5px;top:558px;">3600</div>
<div class="t at" style="left:1242.5px;top:559px;color:#444;letter-spacing:0.8px">Seconds</div>
<div class="cb" style="left:71px;top:595px"></div>
<div class="t num" style="left:138.2px;top:597px;letter-spacing:-1.3px">13</div>
<div class="t rt" style="left:189.5px;top:598px;letter-spacing:1.48px">dbocustomers22</div>
<div class="inp" style="left:420px;top:590px;width:118px"></div>
<div class="adn" style="left:538px;top:590px;width:102px"></div>
<div class="t it" style="left:429px;top:597px;">1</div>
<div class="t at" style="left:548.5px;top:598px;">Minutes</div>
<div class="inp" style="left:651px;top:590px;width:118px"></div>
<div class="adn" style="left:769px;top:590px;width:103px"></div>
<div class="t it" style="left:660px;top:597px;">2</div>
<div class="t at" style="left:779.5px;top:598px;">Minutes</div>
<div class="inp" style="left:883px;top:590px;width:117px"></div>
<div class="adn" style="left:1000px;top:590px;width:103px"></div>
<div class="t it" style="left:892px;top:597px;">3</div>
<div class="t at" style="left:1010.5px;top:598px;">Minutes</div>
<div class="inp" style="left:1114px;top:590px;width:117px"></div>
<div class="adn" style="left:1231px;top:590px;width:103px;background:#eeeeee;border:1px solid #e0e0e0"></div>
<div class="t it" style="left:1124.5px;top:597px;">3600</div>
<div class="t at" style="left:1242.5px;top:598px;color:#444;letter-spacing:0.8px">Seconds</div>
</div>
<div class="a" style="left:1340px;top:88px;width:16px;height:519px;background:#f1f1f1"></div>
<div class="a" style="left:1342px;top:104px;width:12px;height:130px;background:#c1c1c1"></div>
<svg style="left:1344px;top:95px" width="8" height="4" viewBox="0 0 8 4"><path d="M0 4 L4 0 L8 4Z" fill="#a3a3a3"/></svg>
<svg style="left:1344px;top:596px" width="8" height="4" viewBox="0 0 8 4"><path d="M0 0 L4 4 L8 0Z" fill="#505050"/></svg>
<div class="a" style="left:0;top:635px;width:1365px;height:20px;background:#c1ccf4"></div>
<div class="a" style="left:0;top:655px;width:1365px;height:1px;background:#d2cfc8"></div>
<div class="a" style="left:0;top:656px;width:1365px;height:1px;background:#fcfcfb"></div>
<div class="a" style="left:0;top:657px;width:1365px;height:1px;background:#dad6cd"></div>
<div class="t " style="left:16.5px;top:640px;font-size:12px;color:#2f3b3b;letter-spacing:0.5px">Ready</div>
<div class="t " style="left:1201.5px;top:640px;font-size:12px;color:#2f3b3b;letter-spacing:0.1px">2021 &copy; RightData Inc.</div>
<div class="a" style="left:107px;top:426px;width:1234px;height:42px;border:3px solid #ff3b3b;filter:drop-shadow(2px 4px 3px rgba(0,0,0,0.45))"></div>
<div class="a" style="left:1100px;top:43px;width:30px;height:28px;border:3px solid #ff3b3b;filter:drop-shadow(2px 4px 3px rgba(0,0,0,0.45))"></div>
<svg style="left:0;top:0;filter:drop-shadow(2px 4px 3px rgba(0,0,0,0.45))" width="1365" height="80" viewBox="0 0 1365 80">
<path d="M1009.5 25.5 L1087.5 45.2" stroke="#ff3b3b" stroke-width="3.5" stroke-dasharray="9.1 2.75" fill="none"/>
<path d="M1098.2 47.4 L1091 41 L1088.8 49.8Z" fill="#ff3b3b"/></svg>
<svg style="left:0;top:0;filter:drop-shadow(2px 4px 3px rgba(0,0,0,0.45))" width="1100" height="40"><text x="913" y="28" font-family="Liberation Sans" font-size="15" font-weight="bold" fill="#fff" stroke="#fff" stroke-width="7.5" stroke-linejoin="round">Save button</text></svg>
<div class="t" style="left:913px;top:15px;font-size:15px;font-weight:bold;color:#ff3b3b;line-height:15px">Save button</div>
</div></body></html>
